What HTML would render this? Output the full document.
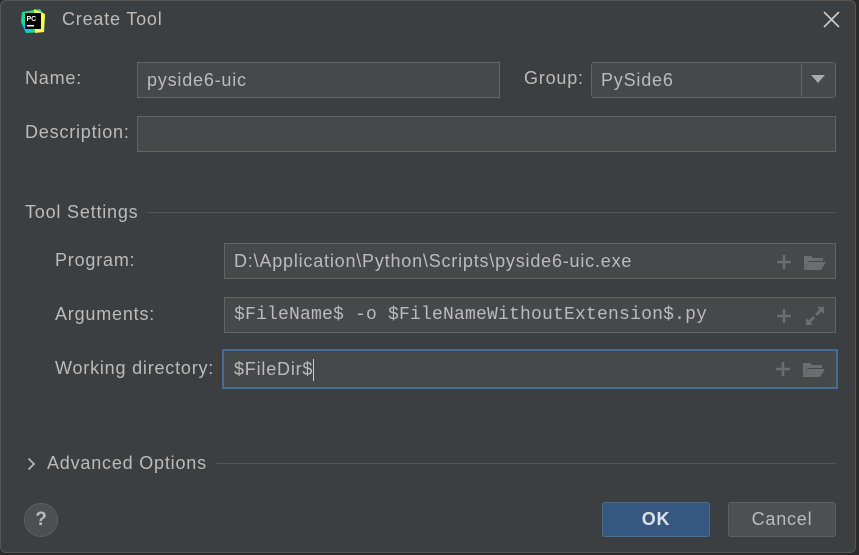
<!DOCTYPE html>
<html><head><meta charset="utf-8"><style>
*{box-sizing:border-box;margin:0;padding:0}
body{width:859px;height:555px;background:#2b2b2b;overflow:hidden;font-family:"Liberation Sans","Noto Sans CJK SC",sans-serif;font-size:18px;letter-spacing:0.8px;color:#bbbbbb}
#win{position:absolute;left:0;top:0;width:856px;height:553px;background:#3c3f41;box-shadow:inset 0 0 0 1px #555;border-radius:6px}
.a{position:absolute;white-space:nowrap}
.f{position:absolute;background:#45494a;border:1px solid #646464;height:36px;line-height:34px;padding-left:9px;color:#bbbbbb}
.ic{position:absolute;top:9px}
.sep{position:absolute;height:1px;background:#555}
</style></head><body>
<div id="win">
<svg class="a" style="left:20px;top:8px" width="26" height="26" viewBox="0 0 26 26">
<polygon points="2,4 20,1 25,8 24,24 6,25 1,14" fill="#21d789"/>
<polygon points="14,1 25,6 24,24 15,25" fill="#fcf84a"/>
<polygon points="1,14 6,25 12,22" fill="#07c3f2"/>
<rect x="5" y="5" width="16" height="16" fill="#000"/>
<text x="6.5" y="13" font-size="7" font-weight="bold" fill="#fff" font-family="Liberation Sans" letter-spacing="0">PC</text>
<rect x="7" y="17" width="7" height="1.5" fill="#fff"/>
</svg>
<div class="a" style="left:62px;top:9px;font-size:18px">Create Tool</div>
<svg class="a" style="left:823px;top:11px" width="17" height="17"><path d="M1 1L16 16M16 1L1 16" stroke="#ccc" stroke-width="1.6"/></svg>

<div class="a" style="left:25px;top:68px">Name:</div>
<div class="f" style="left:137px;top:62px;width:363px">pyside6-uic</div>
<div class="a" style="left:524px;top:68px">Group:</div>
<div class="f" style="left:591px;top:62px;width:245px;border-radius:3px">PySide6</div>
<div class="a" style="left:801px;top:63px;width:1px;height:34px;background:#646464"></div>
<svg class="a" style="left:811px;top:75px" width="14" height="9"><path d="M0 0H14L7 8Z" fill="#aaa"/></svg>

<div class="a" style="left:25px;top:122px">Description:</div>
<div class="f" style="left:137px;top:116px;width:699px"></div>

<div class="a" style="left:25px;top:202px">Tool Settings</div>
<div class="sep" style="left:147px;top:212px;width:689px"></div>

<div class="a" style="left:55px;top:250px">Program:</div>
<div class="f" style="left:224px;top:243px;width:612px">D:\Application\Python\Scripts\pyside6-uic.exe
<svg class="ic" style="left:550px" width="18" height="18"><path d="M9 2V16M2 9H16" stroke="#6b6e70" stroke-width="2.5"/></svg>
<svg class="ic" style="left:578px;top:9px" width="24" height="18"><path d="M1 3H8L10 5H20V8H6L1 17Z" fill="#6b6e70"/><path d="M6 9H23L18 17H1Z" fill="#6b6e70"/></svg>
</div>

<div class="a" style="left:55px;top:304px">Arguments:</div>
<div class="f" style="left:224px;top:297px;width:612px;font-family:'Liberation Mono',monospace;font-size:18px;letter-spacing:0.2px">$FileName$ -o $FileNameWithoutExtension$.py
<svg class="ic" style="left:550px" width="18" height="18"><path d="M9 2V16M2 9H16" stroke="#6b6e70" stroke-width="2.5"/></svg>
<svg class="ic" style="left:580px;top:8px" width="20" height="20"><path d="M12 1H19V8L16.5 5.5L12 10L10 8L14.5 3.5ZM8 19H1V12L3.5 14.5L8 10L10 12L5.5 16.5Z" fill="#6b6e70"/></svg>
</div>

<div class="a" style="left:55px;top:358px">Working directory:</div>
<div class="f" style="left:222px;top:349px;width:616px;height:40px;border:2px solid #466d94;line-height:36px;padding-left:10px">$FileDir$<span style="display:inline-block;width:1px;height:22px;background:#ccc;vertical-align:middle"></span>
<svg class="ic" style="left:550px" width="18" height="18"><path d="M9 2V16M2 9H16" stroke="#6b6e70" stroke-width="2.5"/></svg>
<svg class="ic" style="left:578px;top:9px" width="24" height="18"><path d="M1 3H8L10 5H20V8H6L1 17Z" fill="#6b6e70"/><path d="M6 9H23L18 17H1Z" fill="#6b6e70"/></svg>
</div>

<svg class="a" style="left:27px;top:457px" width="9" height="14"><path d="M1.5 1.5L7 7L1.5 12.5" stroke="#bbb" stroke-width="1.6" fill="none"/></svg>
<div class="a" style="left:47px;top:453px">Advanced Options</div>
<div class="sep" style="left:217px;top:463px;width:619px"></div>

<div class="a" style="left:24px;top:503px;width:34px;height:34px;border-radius:50%;background:#4c5052;border:1px solid #5e6060;text-align:center;line-height:32px;font-weight:bold;font-size:19px;color:#bbb;letter-spacing:0">?</div>
<div class="a" style="left:602px;top:502px;width:108px;height:35px;background:#365880;border:1px solid #4c708c;border-radius:3px;text-align:center;line-height:33px;font-weight:bold;color:#dfe1e5">OK</div>
<div class="a" style="left:728px;top:502px;width:108px;height:35px;background:#4c5052;border:1px solid #5e6060;border-radius:3px;text-align:center;line-height:33px;color:#bbb">Cancel</div>
</div>
</body></html>
